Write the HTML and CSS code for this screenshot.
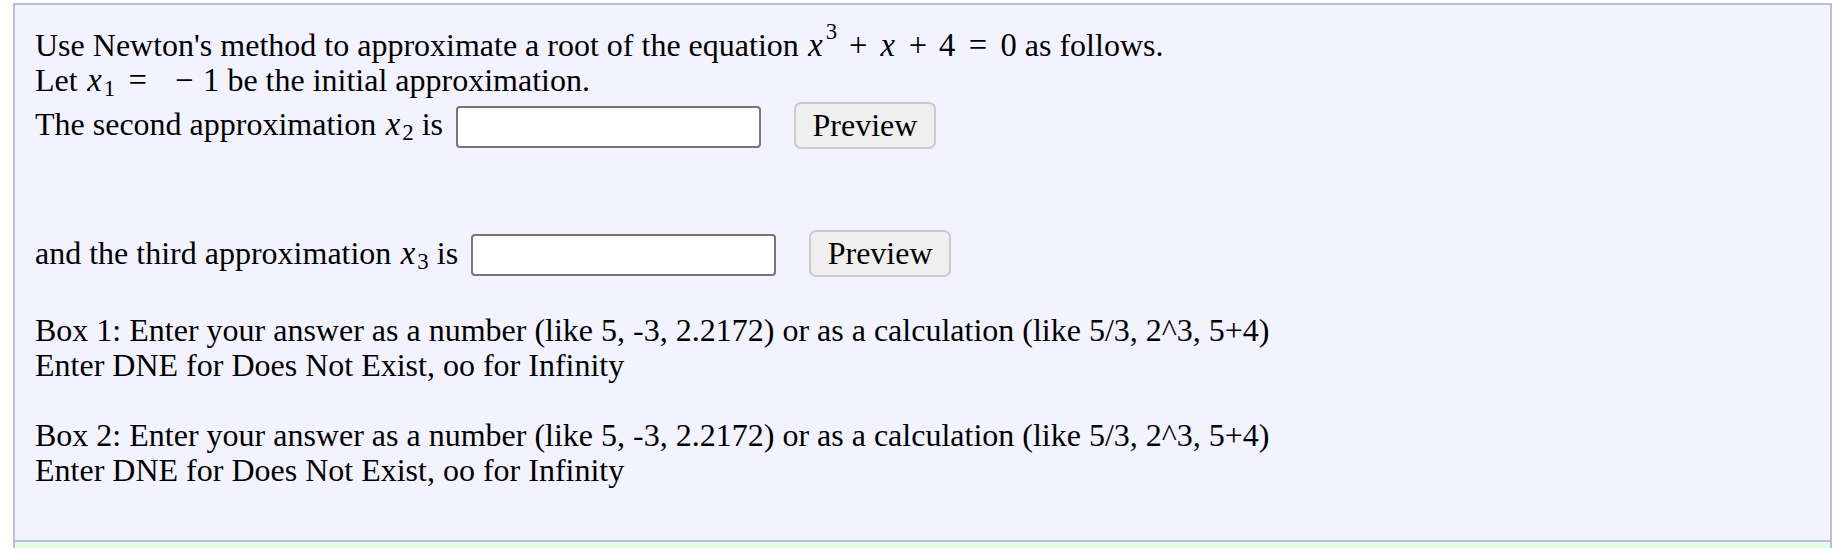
FILE: index.html
```html
<!DOCTYPE html>
<html>
<head>
<meta charset="utf-8">
<link rel="stylesheet" href="styles.css">
</head>
<body>
<div class="problem">
  <div class="line">Use Newton's method to approximate a root of the equation <span class="math"><i>x</i><sup>3</sup><span class="bin">+</span><i>x</i><span class="bin">+</span><span class="num">4</span><span class="rel">=</span><span class="num">0</span></span> as follows.</div>
  <div class="line">Let <span class="math"><i>x</i><sub>1</sub><span class="rel">=</span><span class="neg">−</span><span class="num">1</span></span> be the initial approximation.</div>
  <div class="row row-first">
    <span class="label">The second approximation <span class="math"><i>x</i><sub>2</sub></span> is</span>
    <input class="answer" type="text">
    <button class="preview" type="button">Preview</button>
  </div>
  <div class="row row-second">
    <span class="label">and the third approximation <span class="math"><i>x</i><sub>3</sub></span> is</span>
    <input class="answer" type="text">
    <button class="preview" type="button">Preview</button>
  </div>
  <div class="hint">
    <div class="line">Box 1: Enter your answer as a number (like 5, -3, 2.2172) or as a calculation (like 5/3, 2^3, 5+4)</div>
    <div class="line">Enter DNE for Does Not Exist, oo for Infinity</div>
  </div>
  <div class="hint hint-second">
    <div class="line">Box 2: Enter your answer as a number (like 5, -3, 2.2172) or as a calculation (like 5/3, 2^3, 5+4)</div>
    <div class="line">Enter DNE for Does Not Exist, oo for Infinity</div>
  </div>
</div>
<div class="next"></div>
</body>
</html>
```

FILE: styles.css
```css
html, body {
  margin: 0;
  padding: 0;
  background: #ffffff;
  overflow: hidden;
}

body {
  font-family: "Liberation Serif", "Times New Roman", serif;
  font-size: 32px;
  color: #000000;
}

.problem {
  margin: 3px 0 0 13px;
  width: 1780px;
  padding: 23px 15px 52px 20px;
  border: 2px solid #bcbcdc;
  background: #f3f3ff;
}

.line {
  line-height: 35px;
  height: 35px;
  white-space: nowrap;
}

.math {
  font-size: 1.02em;
}

.math i {
  font-style: italic;
  font-family: "Liberation Serif", serif;
  padding: 0 2px 0 1.5px;
}

.math sup,
.math sub {
  font-size: 0.7em;
  line-height: 0;
}

.math sup {
  vertical-align: 0.75em;
  margin-left: 1px;
}

.math sub {
  vertical-align: -0.22em;
  margin-left: 0;
}

.bin {
  margin: 0 0.36em;
}

.rel {
  margin: 0 0.41em;
}

.neg {
  margin: 0 0.3em 0 0.45em;
}

.row {
  display: flex;
  align-items: flex-start;
  height: 47px;
}

.row-first {
  margin-top: 4px;
}

.row-second {
  margin-top: 81px;
}

.label {
  line-height: 35px;
  white-space: nowrap;
}

.row-first .label {
  margin-top: 5px;
}

.row-second .label {
  margin-top: 6px;
}

.answer {
  box-sizing: border-box;
  width: 305px;
  height: 42px;
  margin: 4px 0 0 13px;
  padding: 0 6px;
  border: 2px solid #777777;
  border-radius: 4px;
  background: #ffffff;
  font-family: "Liberation Serif", serif;
  font-size: 28px;
  outline: none;
}

.preview {
  box-sizing: border-box;
  width: 142px;
  height: 47px;
  margin-left: 33px;
  padding: 0;
  border: 2px solid #cbcbcb;
  border-radius: 7px;
  background: #efefef;
  font-family: "Liberation Serif", serif;
  font-size: 32px;
  color: #000000;
  line-height: 43px;
}

.hint {
  margin-top: 36px;
}

.hint-second {
  margin-top: 35px;
}

.next {
  margin-left: 13px;
  width: 1815px;
  height: 6px;
  border-left: 2px solid #bcbcdc;
  border-right: 2px solid #bcbcdc;
  background: #e0ffe0;
}
```
